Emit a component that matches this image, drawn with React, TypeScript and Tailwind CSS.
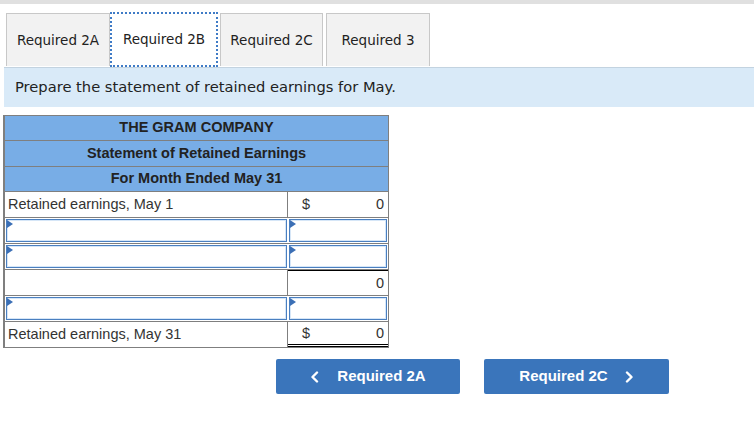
import React from "react";

const Tri = () => (
  <span className="absolute left-0 top-0 w-0 h-0 border-y-[4px] border-y-transparent border-l-[6px] border-l-[#3b6fb5]" />
);

const InputCell = ({ wide }: { wide?: boolean }) => (
  <div className={`${wide ? "w-[283px]" : "flex-1"} h-full p-[1px]`}>
    <div className="relative h-full border border-[#4a7fc0] bg-white shadow-[inset_0_0_0_1px_#d6e6f7]">
      <Tri />
    </div>
  </div>
);

const Tab = ({ label, active }: { label: string; active?: boolean }) => (
  <div
    className={
      active
        ? "h-[55px] -mt-[1px] w-[108px] flex items-center justify-center bg-white border-2 border-dotted border-[#3f7bc6] text-[13.5px] text-[#222]"
        : "h-[53px] flex items-center justify-center bg-[#f2f2f2] border border-b-0 border-[#c8c8c8] text-[13.5px] text-[#222]"
    }
  >
    {label}
  </div>
);

export default function App() {
  const sans = { fontFamily: '"Liberation Sans", Arial, sans-serif' };
  return (
    <div className="w-[754px] h-[439px] bg-white overflow-hidden" style={{ fontFamily: '"DejaVu Sans", Verdana, sans-serif' }}>
      <div className="h-[4px] bg-[#e0e0e0]" />
      <div className="mt-[9px] pl-[6px] flex items-start">
        <div className="w-[104px]"><Tab label="Required 2A" /></div>
        <Tab label="Required 2B" active />
        <div className="w-[103px] ml-[2px]"><Tab label="Required 2C" /></div>
        <div className="w-[104px] ml-[3px]"><Tab label="Required 3" /></div>
      </div>
      <div className="ml-[4px] h-[40px] bg-[#d9eaf8] border-t border-[#c3d3e0] flex items-center pl-[11px] text-[14.7px] text-[#222]">
        Prepare the statement of retained earnings for May.
      </div>

      <div className="mt-[8px] ml-[3px] w-[386px] border-l-2 border-r border-[#7f7f7f] text-[#333]" style={sans}>
        <div className="h-[26px] bg-[#78ade6] border-t border-b border-[#7f7f7f] flex items-center justify-center font-bold text-[14.5px] text-[#222]">
          THE GRAM COMPANY
        </div>
        <div className="h-[26px] bg-[#78ade6] border-b border-[#7f7f7f] flex items-center justify-center font-bold text-[14.5px] text-[#222]">
          Statement of Retained Earnings
        </div>
        <div className="h-[25px] bg-[#78ade6] border-b border-[#7f7f7f] flex items-center justify-center font-bold text-[14.5px] text-[#222]">
          For Month Ended May 31
        </div>

        <div className="h-[26px] flex border-b border-[#7f7f7f]">
          <div className="w-[283px] border-r border-[#7f7f7f] flex items-center pl-[3px] pt-[1px] text-[14.5px]">Retained earnings, May 1</div>
          <div className="flex-1 flex items-center justify-between pl-[14px] pr-[4px] pt-[1px] text-[14.5px]">
            <span>$</span>
            <span>0</span>
          </div>
        </div>

        <div className="h-[26px] flex border-b border-[#7f7f7f]">
          <InputCell wide />
          <InputCell />
        </div>
        <div className="h-[26px] flex border-b border-[#7f7f7f]">
          <InputCell wide />
          <InputCell />
        </div>

        <div className="h-[26px] flex border-b border-[#7f7f7f]">
          <div className="w-[283px] border-r border-[#7f7f7f]" />
          <div className="flex-1 border-t border-black flex items-center justify-end pr-[4px] pt-[1px] text-[14.5px]">0</div>
        </div>

        <div className="h-[26px] flex border-b border-[#7f7f7f]">
          <InputCell wide />
          <InputCell />
        </div>

        <div className="h-[26px] flex border-b border-[#7f7f7f]">
          <div className="w-[283px] border-r border-[#7f7f7f] flex items-center pl-[3px] pt-[1px] text-[14.5px]">Retained earnings, May 31</div>
          <div className="flex-1 border-b-[3px] border-double border-black flex items-center justify-between pl-[14px] pr-[4px] pt-[1px] text-[14.5px]">
            <span>$</span>
            <span>0</span>
          </div>
        </div>
      </div>

      <div className="mt-[11px] ml-[276px] flex gap-[24px]" style={sans}>
        <div className="w-[184px] h-[35px] rounded-[2px] bg-[#3a75bb] flex items-center justify-center gap-[17px] text-white font-bold text-[15px]">
          <svg width="10" height="12" viewBox="0 0 10 12" fill="none">
            <polyline points="7,1.5 2.5,6 7,10.5" stroke="white" strokeWidth="2.4" strokeLinecap="round" strokeLinejoin="round" />
          </svg>
          <span>Required 2A</span>
        </div>
        <div className="w-[185px] h-[35px] rounded-[2px] bg-[#3a75bb] flex items-center justify-center gap-[16px] text-white font-bold text-[15px]">
          <span>Required 2C</span>
          <svg width="10" height="12" viewBox="0 0 10 12" fill="none">
            <polyline points="3,1.5 7.5,6 3,10.5" stroke="white" strokeWidth="2.4" strokeLinecap="round" strokeLinejoin="round" />
          </svg>
        </div>
      </div>
    </div>
  );
}
